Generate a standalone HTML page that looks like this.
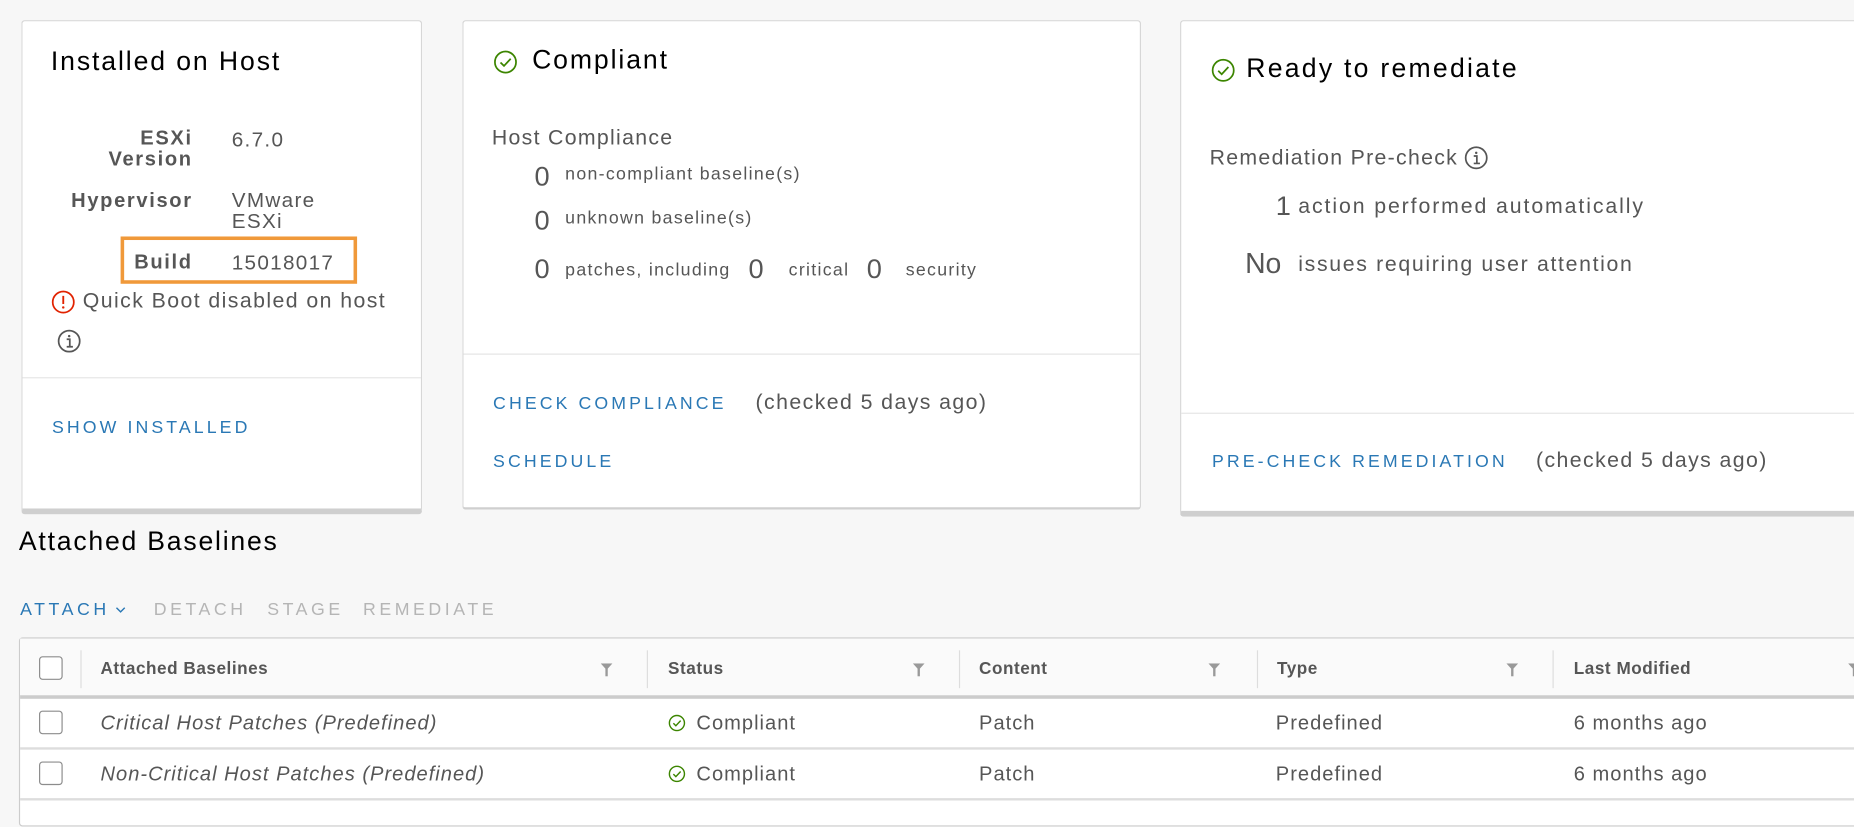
<!DOCTYPE html>
<html><head><meta charset="utf-8"><style>
html,body{margin:0;padding:0;width:1854px;height:816px;overflow:hidden;background:#f7f7f7;}
#w{position:absolute;left:0;top:0;width:1568px;height:690px;transform:scale(1.1824);transform-origin:0 0;font-family:"Liberation Sans",sans-serif;color:#565656;}
.a{position:absolute;white-space:nowrap;}
.card{position:absolute;background:#fff;border:1px solid #d7d7d7;border-radius:3px;box-sizing:border-box;}
.t{font-size:22.5px;color:#000;letter-spacing:1.6px;}
.b{font-weight:bold;color:#565656;font-size:17px;letter-spacing:1.4px;}
.v{font-size:18px;color:#565656;letter-spacing:1.1px;}
.lk{font-size:15px;letter-spacing:2.6px;color:#2a78b5;}
.div{position:absolute;left:0;right:0;height:1px;background:#e5e5e5;}
.big{font-size:23px;color:#565656;}
.sm{font-size:15px;color:#565656;letter-spacing:1.1px;}
.tb{font-size:15px;letter-spacing:3px;color:#b5b5b5;}
.th{font-size:14.5px;font-weight:bold;color:#565656;letter-spacing:0.45px;}
.td{font-size:17px;color:#565656;letter-spacing:0.85px;}
.cb{position:absolute;width:18px;height:18px;border:1.5px solid #8c8c8c;border-radius:3px;box-sizing:border-box;background:#fff;}
.vl{position:absolute;width:1px;background:#ddd;top:550px;height:32px;}
</style></head><body><div id="w">

<!-- card 1 -->
<div class="card" style="left:18px;top:17px;width:339px;height:418px;border-bottom:5px solid #cfcfcf;">
  <div class="a t" style="left:24px;top:21px;">Installed on Host</div>
  <div class="a b" style="right:193px;top:90px;text-align:right;line-height:18px;">ESXi<br>Version</div>
  <div class="a v" style="left:177px;top:90px;font-size:17.5px;">6.7.0</div>
  <div class="a b" style="right:193px;top:142px;">Hypervisor</div>
  <div class="a v" style="left:177px;top:142px;line-height:18px;font-size:17.5px;">VMware<br>ESXi</div>
  <div class="a" style="left:83px;top:182px;width:200px;height:40px;border:3px solid #f0993a;box-sizing:border-box;"></div>
  <div class="a b" style="right:193px;top:194px;">Build</div>
  <div class="a v" style="left:177px;top:194px;font-size:17.5px;">15018017</div>
  <svg class="a" style="left:24px;top:227px;" width="21" height="21" viewBox="0 0 20 20"><circle cx="10" cy="10" r="8.5" fill="none" stroke="#e12200" stroke-width="1.4"/><line x1="10" y1="5" x2="10" y2="11.5" stroke="#e12200" stroke-width="1.5"/><circle cx="10" cy="14.3" r="1" fill="#e12200"/></svg>
  <div class="a v" style="left:51px;top:226px;letter-spacing:1.2px;">Quick Boot disabled on host</div>
  <svg class="a" style="left:29px;top:260px;" width="21" height="21" viewBox="0 0 20 20"><circle cx="10" cy="10" r="8.5" fill="none" stroke="#565656" stroke-width="1.4"/><circle cx="10" cy="6" r="1" fill="#565656"/><path d="M8 8.5h2.5v6M8 14.5h5" fill="none" stroke="#565656" stroke-width="1.4"/></svg>
  <div class="div" style="top:301px;"></div>
  <div class="a lk" style="left:25px;top:335px;">SHOW INSTALLED</div>
</div>

<!-- card 2 -->
<div class="card" style="left:391px;top:17px;width:574px;height:414px;border-bottom:2px solid #cfcfcf;">
  <svg class="a" style="left:25px;top:24px;" width="21" height="21" viewBox="0 0 20 20"><circle cx="10" cy="10" r="8.5" fill="none" stroke="#3c8500" stroke-width="1.4"/><path d="M6 10.3l2.8 2.8L14.2 7.3" fill="none" stroke="#3c8500" stroke-width="1.4"/></svg>
  <div class="a t" style="left:58px;top:20px;">Compliant</div>
  <div class="a v" style="left:24px;top:88px;">Host Compliance</div>
  <div class="a big" style="left:60px;top:118px;">0</div><div class="a sm" style="left:86px;top:121px;">non-compliant baseline(s)</div>
  <div class="a big" style="left:60px;top:155px;">0</div><div class="a sm" style="left:86px;top:158px;">unknown baseline(s)</div>
  <div class="a big" style="left:60px;top:196px;">0</div><div class="a sm" style="left:86px;top:202px;">patches, including</div>
  <div class="a big" style="left:241px;top:196px;">0</div><div class="a sm" style="left:275px;top:202px;">critical</div>
  <div class="a big" style="left:341px;top:196px;">0</div><div class="a sm" style="left:374px;top:202px;">security</div>
  <div class="div" style="top:281px;"></div>
  <div class="a lk" style="left:25px;top:315px;">CHECK COMPLIANCE</div>
  <div class="a v" style="left:247px;top:312px;letter-spacing:1.2px;">(checked 5 days ago)</div>
  <div class="a lk" style="left:25px;top:364px;">SCHEDULE</div>
</div>

<!-- card 3 -->
<div class="card" style="left:998px;top:17px;width:590px;height:420px;border-bottom:5px solid #cfcfcf;">
  <svg class="a" style="left:25px;top:31px;" width="21" height="21" viewBox="0 0 20 20"><circle cx="10" cy="10" r="8.5" fill="none" stroke="#3c8500" stroke-width="1.4"/><path d="M6 10.3l2.8 2.8L14.2 7.3" fill="none" stroke="#3c8500" stroke-width="1.4"/></svg>
  <div class="a t" style="left:55px;top:27px;letter-spacing:1.9px;">Ready to remediate</div>
  <div class="a v" style="left:24px;top:105px;">Remediation Pre-check</div>
  <svg class="a" style="left:239px;top:105px;" width="21" height="21" viewBox="0 0 20 20"><circle cx="10" cy="10" r="8.5" fill="none" stroke="#565656" stroke-width="1.4"/><circle cx="10" cy="6" r="1" fill="#565656"/><path d="M8 8.5h2.5v6M8 14.5h5" fill="none" stroke="#565656" stroke-width="1.4"/></svg>
  <div class="a big" style="left:80px;top:143px;">1</div><div class="a v" style="left:99px;top:146px;letter-spacing:1.6px;">action performed automatically</div>
  <div class="a big" style="left:54px;top:192px;font-size:24px;">No</div><div class="a v" style="left:99px;top:195px;letter-spacing:1.4px;">issues requiring user attention</div>
  <div class="div" style="top:331px;"></div>
  <div class="a lk" style="left:26px;top:364px;">PRE-CHECK REMEDIATION</div>
  <div class="a v" style="left:300px;top:361px;letter-spacing:1.2px;">(checked 5 days ago)</div>
</div>

<div class="a t" style="left:16px;top:445px;letter-spacing:1.5px;">Attached Baselines</div>
<div class="a tb" style="left:17px;top:507px;color:#2a78b5;">ATTACH</div>
<svg class="a" style="left:97px;top:512px;" width="10" height="8" viewBox="0 0 10 8"><path d="M1.5 2l3.5 3.5L8.5 2" fill="none" stroke="#2a78b5" stroke-width="1.2"/></svg>
<div class="a tb" style="left:130px;top:507px;">DETACH</div>
<div class="a tb" style="left:226px;top:507px;">STAGE</div>
<div class="a tb" style="left:307px;top:507px;">REMEDIATE</div>

<!-- table -->
<div class="a" style="left:16px;top:539px;width:1560px;height:160px;background:#fff;border:1px solid #ccc;border-radius:3px;box-sizing:border-box;"></div>
<div class="a" style="left:17px;top:540px;width:1560px;height:48px;background:#fafafa;"></div>
<div class="a" style="left:17px;top:588px;width:1560px;height:3px;background:#ccc;"></div>
<div class="a" style="left:17px;top:632px;width:1560px;height:2px;background:#ddd;"></div>
<div class="a" style="left:17px;top:675px;width:1560px;height:2px;background:#ddd;"></div>
<div class="cb" style="left:33px;top:555px;width:20px;height:20px;"></div>
<div class="vl" style="left:68px;"></div><div class="vl" style="left:547px;"></div><div class="vl" style="left:811px;"></div><div class="vl" style="left:1063px;"></div><div class="vl" style="left:1313px;"></div>
<div class="a th" style="left:85px;top:558px;">Attached Baselines</div>
<div class="a th" style="left:565px;top:558px;">Status</div>
<div class="a th" style="left:828px;top:558px;">Content</div>
<div class="a th" style="left:1080px;top:558px;">Type</div>
<div class="a th" style="left:1331px;top:558px;">Last Modified</div>
<svg class="a" style="left:508px;top:561px;" width="10" height="11" viewBox="0 0 10 11"><path d="M0 0h10L6 4.5V11H4V4.5z" fill="#999"/></svg>
<svg class="a" style="left:772px;top:561px;" width="10" height="11" viewBox="0 0 10 11"><path d="M0 0h10L6 4.5V11H4V4.5z" fill="#999"/></svg>
<svg class="a" style="left:1022px;top:561px;" width="10" height="11" viewBox="0 0 10 11"><path d="M0 0h10L6 4.5V11H4V4.5z" fill="#999"/></svg>
<svg class="a" style="left:1274px;top:561px;" width="10" height="11" viewBox="0 0 10 11"><path d="M0 0h10L6 4.5V11H4V4.5z" fill="#999"/></svg>
<svg class="a" style="left:1563px;top:561px;" width="10" height="11" viewBox="0 0 10 11"><path d="M0 0h10L6 4.5V11H4V4.5z" fill="#999"/></svg>

<div class="cb" style="left:33px;top:601px;width:20px;height:20px;"></div>
<div class="a td" style="left:85px;top:602px;font-style:italic;">Critical Host Patches (Predefined)</div>
<svg class="a" style="left:565px;top:604px;" width="15" height="15" viewBox="0 0 20 20"><circle cx="10" cy="10" r="8.5" fill="none" stroke="#3c8500" stroke-width="1.6"/><path d="M6 10.3l2.8 2.8L14.2 7.3" fill="none" stroke="#3c8500" stroke-width="1.6"/></svg>
<div class="a td" style="left:589px;top:602px;">Compliant</div>
<div class="a td" style="left:828px;top:602px;">Patch</div>
<div class="a td" style="left:1079px;top:602px;">Predefined</div>
<div class="a td" style="left:1331px;top:602px;">6 months ago</div>

<div class="cb" style="left:33px;top:644px;width:20px;height:20px;"></div>
<div class="a td" style="left:85px;top:645px;font-style:italic;">Non-Critical Host Patches (Predefined)</div>
<svg class="a" style="left:565px;top:647px;" width="15" height="15" viewBox="0 0 20 20"><circle cx="10" cy="10" r="8.5" fill="none" stroke="#3c8500" stroke-width="1.6"/><path d="M6 10.3l2.8 2.8L14.2 7.3" fill="none" stroke="#3c8500" stroke-width="1.6"/></svg>
<div class="a td" style="left:589px;top:645px;">Compliant</div>
<div class="a td" style="left:828px;top:645px;">Patch</div>
<div class="a td" style="left:1079px;top:645px;">Predefined</div>
<div class="a td" style="left:1331px;top:645px;">6 months ago</div>

</div></body></html>
